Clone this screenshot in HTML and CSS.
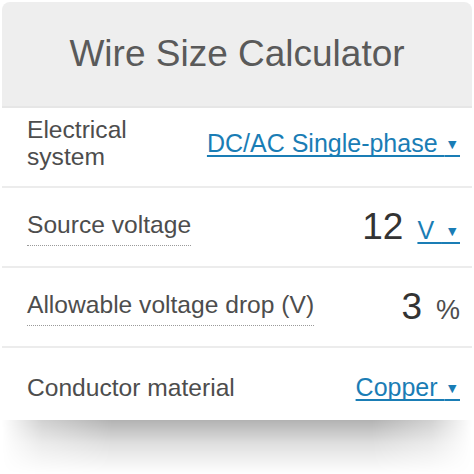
FILE: index.html
```html
<!DOCTYPE html>
<html lang="en">
<head>
    <meta charset="UTF-8">
    <meta name="viewport" content="width=device-width, initial-scale=1.0">
    <title>Wire Size Calculator</title>
    <link rel="stylesheet" href="styles.css">
</head>
<body>

    <!-- Calculator Card -->
    <div class="calc-card">
        <header class="calc-header">
            <h1>Wire Size Calculator</h1>
        </header>

        <div class="calc-row first">
            <span class="row-label">Electrical<br>system</span>
            <a href="#" class="select-link">DC/AC Single-phase <span class="caret">&nbsp;&#9660;&nbsp;</span></a>
        </div>

        <div class="calc-row">
            <span class="row-label hint">Source voltage</span>
            <span class="row-value">
                <span class="num">12</span>
                <a href="#" class="select-link">V <span class="caret">&nbsp;&nbsp;&#9660;&nbsp;</span></a>
            </span>
        </div>

        <div class="calc-row">
            <span class="row-label hint">Allowable voltage drop (V)</span>
            <span class="row-value">
                <span class="num">3</span>
                <span class="unit">%</span>
            </span>
        </div>

        <div class="calc-row last">
            <span class="row-label">Conductor material</span>
            <a href="#" class="select-link">Copper <span class="caret">&nbsp;&#9660;&nbsp;</span></a>
        </div>
    </div>

    <!-- soft drop shadow under the card -->
    <div class="calc-shadow"></div>

</body>
</html>
```

FILE: styles.css
```css
body {
    font-family: "Liberation Sans", Arial, sans-serif;
    background-color: #ffffff;
    margin: 0;
    padding: 2px 2px 0 2px;
}

.calc-card {
    width: 470px;
    background: #ffffff;
    border-radius: 8px 8px 0 0;
}

.calc-header {
    box-sizing: border-box;
    height: 106px;
    background: #eeeeee;
    border-radius: 8px 8px 0 0;
    display: flex;
    align-items: center;
    justify-content: center;
    border-bottom: 2px solid #e6e6e6;
}

.calc-header h1 {
    margin: 0;
    font-size: 37px;
    font-weight: normal;
    color: #5a5a5a;
}

.calc-row {
    box-sizing: border-box;
    height: 80px;
    padding: 0 12px 0 25px;
    display: flex;
    align-items: center;
    justify-content: space-between;
    border-bottom: 2px solid #ececec;
    font-size: 24.6px;
    color: #4d4d4d;
}

.calc-row.first {
    padding-bottom: 8px;
}

.calc-row.last {
    height: 72px;
    padding-top: 7px;
    border-bottom: none;
}

.row-label {
    line-height: 27px;
}

.row-label.hint {
    margin-top: 2px;
    padding-bottom: 7px;
    border-bottom: 1px dotted #9a9a9a;
}

.row-value {
    display: flex;
    align-items: baseline;
}

.num {
    font-size: 37px;
    color: #333333;
    margin-right: 14px;
}

.unit {
    font-size: 27px;
    color: #4d4d4d;
}

.select-link {
    color: #1a7db5;
    font-size: 25px;
    text-decoration: underline;
    text-decoration-skip-ink: none;
    text-underline-offset: 3px;
}

.caret {
    font-family: "DejaVu Sans", sans-serif;
    font-size: 11px;
    vertical-align: 4px;
}

.calc-shadow {
    width: 470px;
    height: 54px;
    background: linear-gradient(to bottom, rgba(0, 0, 0, 0.3), rgba(0, 0, 0, 0.12) 45%, rgba(0, 0, 0, 0));
    -webkit-mask-image: linear-gradient(to right, transparent 0, rgba(0, 0, 0, 0.6) 40px, #000 110px, #000 370px, rgba(0, 0, 0, 0.6) 430px, transparent 470px);
    mask-image: linear-gradient(to right, transparent 0, rgba(0, 0, 0, 0.6) 40px, #000 110px, #000 370px, rgba(0, 0, 0, 0.6) 430px, transparent 470px);
}
```
